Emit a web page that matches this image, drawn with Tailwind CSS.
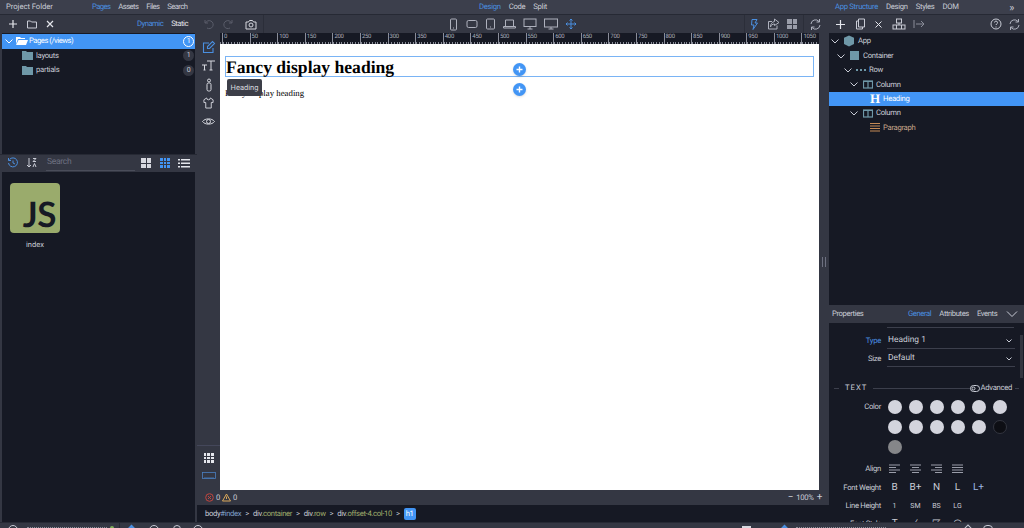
<!DOCTYPE html>
<html><head><meta charset="utf-8"><script src="https://cdn.jsdelivr.net/npm/@tailwindcss/browser@4"></script></head>
<body class="m-0 overflow-hidden bg-[#343743]">
<div class="w-[1024px] h-[528px] overflow-hidden flex flex-col font-['Roboto','Noto_Sans',sans-serif] text-[7.700px] tracking-[-0.3px] [text-rendering:geometricPrecision] text-[#c9ccd6] leading-none">
 <div class="flex h-[522px] shrink-0">
  <!-- LEFT -->
  <div class="w-[197px] shrink-0 flex flex-col border-l-2 border-r-2 border-[#343743] bg-[#161924]">
   <div class="h-[15px] -mx-[2px] shrink-0 bg-[#3c3f4c] flex items-center pl-[6px] border-b border-[#262934] tracking-[-0.6px]">
    <span class="w-[86px] shrink-0 tracking-[-0.05px]">Project Folder</span>
    <span class="text-[#4a8fe0]">Pages</span><span class="ml-[8px]">Assets</span><span class="ml-[8px]">Files</span><span class="ml-[8px]">Search</span>
   </div>
   <div class="h-[18px] shrink-0 bg-[#343743] flex items-center pl-[7px] -mx-[2px] text-[#e4e6ec] tracking-[-0.5px]">
    <svg class="shrink-0" width="12" height="12" viewBox="0 0 12 12" fill="none" stroke="#e4e6ec" stroke-width="1.200"><path d="M6 2v8M2 6h8"/></svg>
    <svg class="ml-[7px] shrink-0" width="12" height="12" viewBox="0 0 12 12" fill="none" stroke="#c9ccd6"><path d="M1.500 3h3l1 1h5v6h-9z"/></svg>
    <svg class="ml-[7px] shrink-0" width="10" height="10" viewBox="0 0 10 10" fill="none" stroke="#e4e6ec" stroke-width="1.200"><path d="M2 2l6 6M8 2l-6 6"/></svg>
    <span class="ml-[82px] text-[#4a8fe0]">Dynamic</span><span class="ml-[8px]">Static</span>
   </div>
   <div class="h-[14.500px] shrink-0 bg-[#4295f5] flex items-center text-white pl-[2px] mt-[1px]">
    <svg width="10" height="10" viewBox="0 0 10 10" fill="none" stroke="white"><path d="M1.500 3.500L5 7l3.500-3.500"/></svg>
    <svg class="ml-[2px]" width="12" height="10" viewBox="0 0 12 10" fill="white"><path d="M0 1h4l1 1h4v1H2L0 8zM2.500 4H12L10 9H0z"/></svg>
    <span class="ml-[1px] tracking-[-0.5px]">Pages (/views)</span>
    <span class="ml-auto mr-[1px] w-[11px] h-[11px] rounded-full border border-white flex items-center justify-center text-[7px]">1</span>
   </div>
   <div class="h-[14.500px] shrink-0 flex items-center pl-[20px]">
    <svg width="11" height="9" viewBox="0 0 11 9" fill="#6f98a8"><path d="M0 0h4l1 1h6v8H0z"/></svg>
    <span class="ml-[3px]">layouts</span>
    <span class="ml-auto mr-[1px] w-[11px] h-[11px] rounded-full bg-[#343743] flex items-center justify-center text-[7px]">1</span>
   </div>
   <div class="h-[14.500px] shrink-0 flex items-center pl-[20px]">
    <svg width="11" height="9" viewBox="0 0 11 9" fill="#6f98a8"><path d="M0 0h4l1 1h6v8H0z"/></svg>
    <span class="ml-[3px]">partials</span>
    <span class="ml-auto mr-[1px] w-[11px] h-[11px] rounded-full bg-[#343743] flex items-center justify-center text-[7px]">0</span>
   </div>
   <div class="h-[76px] shrink-0"></div>
   <div class="h-[18px] shrink-0 -mx-[2px] bg-[#343743] flex items-center pl-[7px] border-t border-[#262934]">
    <svg class="shrink-0" width="12" height="12" viewBox="0 0 12 12" fill="none" stroke="#4a8fe0"><path d="M2.500 2.500A4.500 4.500 0 1 1 1.500 6M1.500 1v2.500H4M6 3.500V6l2 1"/></svg>
    <svg class="ml-[7px] shrink-0" width="12" height="12" viewBox="0 0 12 12" fill="none" stroke="#c9ccd6"><path d="M3 1v9M1 8l2 2 2-2M7 1.500h3l-3 3h3M7 10l1.500-3.500L10 10"/></svg>
    <div class="ml-[8px] w-[89px] h-[15px] shrink-0 flex items-center border-b border-[#4a4d5a] text-[#6d7080] text-[8.500px] pl-[1px]">Search</div>
    <div class="ml-[6px] w-[10px] h-[10px] shrink-0 grid grid-cols-2 gap-[1px]"><i class="bg-[#d6d8df]"></i><i class="bg-[#d6d8df]"></i><i class="bg-[#d6d8df]"></i><i class="bg-[#d6d8df]"></i></div>
    <div class="ml-[9px] w-[10px] h-[10px] shrink-0 grid grid-cols-3 gap-[1px]"><i class="bg-[#4295f5]"></i><i class="bg-[#4295f5]"></i><i class="bg-[#4295f5]"></i><i class="bg-[#4295f5]"></i><i class="bg-[#4295f5]"></i><i class="bg-[#4295f5]"></i><i class="bg-[#4295f5]"></i><i class="bg-[#4295f5]"></i><i class="bg-[#4295f5]"></i></div>
    <svg class="ml-[8px] shrink-0" width="12" height="10" viewBox="0 0 12 10" fill="#e4e6ec"><path d="M0 1h2v1.500H0zM3 1h9v1.500H3zM0 4.500h2V6H0zM3 4.500h9V6H3zM0 8h2v1.500H0zM3 8h9v1.500H3z"/></svg>
   </div>
   <div class="ml-[8px] mt-[11px] w-[50px] h-[50px] rounded-[4px] bg-[#9aab6c] flex items-end justify-end pr-[4px] pb-[1px]">
    <span class="font-['Lato',sans-serif] font-bold text-[#161924] text-[35px] leading-none tracking-[-0.5px]">JS</span>
   </div>
   <div class="ml-[8px] w-[50px] text-center mt-[8px] text-[7.500px] tracking-normal">index</div>
  </div>

  <!-- MIDDLE -->
  <div class="flex-1 min-w-0 flex flex-col">
   <div class="h-[15px] shrink-0 bg-[#3c3f4c] border-b border-[#262934] flex items-center justify-center gap-[8px]">
    <span class="text-[#4a8fe0]">Design</span><span>Code</span><span>Split</span>
   </div>
   <div class="h-[18px] shrink-0 bg-[#343743] flex items-center relative">
    <div class="w-[67px] h-full flex items-center border-r border-[#2b2e39] pl-[6px] gap-[7px]">
     <svg width="12" height="12" viewBox="0 0 12 12" fill="none" stroke="#5a5d6a"><path d="M2 2v3h3M2.500 5A4 4 0 1 1 4 10"/></svg>
     <svg width="12" height="12" viewBox="0 0 12 12" fill="none" stroke="#5a5d6a"><path d="M10 2v3H7M9.500 5A4 4 0 1 0 8 10"/></svg>
     <svg class="ml-[4px]" width="12" height="11" viewBox="0 0 12 11" fill="none" stroke="#d6d8df"><path d="M1 3h2.500L4.500 1.500h3L8.500 3H11v7H1z"/><circle cx="6" cy="6" r="2"/></svg>
    </div>
    <div class="flex-1 h-full flex items-center pl-[184px] gap-[7px]">
     <svg width="11" height="13" viewBox="0 0 11 13" fill="none" stroke="#aeb1bd"><rect x="2.500" y="1" width="6" height="11" rx="1"/><path d="M5 10h1"/></svg>
     <svg width="12" height="10" viewBox="0 0 12 10" fill="none" stroke="#aeb1bd"><rect x="1" y="1.500" width="10" height="7" rx="1.500"/></svg>
     <svg width="11" height="12" viewBox="0 0 11 12" fill="none" stroke="#aeb1bd"><rect x="1.500" y="1" width="8" height="10" rx="1"/><path d="M5 9h1"/></svg>
     <svg width="13" height="12" viewBox="0 0 13 12" fill="none" stroke="#aeb1bd"><path d="M2.500 8V2h8v6M.5 8.500h12v1.500H.5z"/></svg>
     <svg width="14" height="12" viewBox="0 0 14 12" fill="none" stroke="#aeb1bd"><rect x="1" y="1" width="12" height="7.500"/><path d="M7 8.500V11M4.500 11h5"/></svg>
     <svg width="14" height="12" viewBox="0 0 14 12" fill="none" stroke="#aeb1bd"><rect x=".5" y="1" width="13" height="8"/><path d="M7 9v2M4.500 11h5"/></svg>
     <svg width="12" height="12" viewBox="0 0 12 12" fill="none" stroke="#4a8fe0"><path d="M6 1v10M1 6h10M4.500 2.500L6 1l1.500 1.500M4.500 9.500L6 11l1.500-1.500M2.500 4.500L1 6l1.500 1.500M9.500 4.500L11 6 9.500 7.500"/></svg>
    </div>
    <div class="w-[85px] h-full flex items-center border-l border-[#2b2e39] pl-[3px]">
     <svg width="12" height="13" viewBox="0 0 12 13" fill="none" stroke="#4a8fe0"><path d="M4 1.500h5L7 5h2.500L5 11.500 6 7H3.500z"/></svg>
     <svg class="ml-[7px]" width="13" height="12" viewBox="0 0 13 12" fill="none" stroke="#aeb1bd"><path d="M10 7.500V11H1.500V3.500H5M7.500 1L12 4.500 7.500 7.500V6C5.500 6 4 7 3.500 9c0-3 1.500-5 4-5.500z"/></svg>
     <div class="ml-[7px] w-[10px] h-[10px] grid grid-cols-2 gap-[1px]"><i class="bg-[#9a9da9]"></i><i class="bg-[#9a9da9]"></i><i class="bg-[#9a9da9]"></i><i class="bg-[#9a9da9]"></i></div>
     <div class="ml-[6px] w-px h-full bg-[#2b2e39]"></div>
     <svg class="ml-[5px]" width="13" height="13" viewBox="0 0 13 13" fill="none" stroke="#aeb1bd"><path d="M2 6a4.500 4.500 0 0 1 8-2.500M11 7a4.500 4.500 0 0 1-8 2.500M10.500 1v3H7.500M2.500 12V9h3"/></svg>
    </div>
   </div>
   <div class="flex-1 min-h-0 flex">
    <div class="w-[23px] shrink-0 flex flex-col items-center bg-[#343743] pt-[7px]">
     <svg width="14" height="14" viewBox="0 0 14 14" fill="none" stroke="#4a8fe0" stroke-width="1.100"><path d="M11 8v4.500H1.500V3H7M5.500 6.500v2h2l5-5-2-2z"/></svg>
     <svg class="mt-[5px]" width="15" height="13" viewBox="0 0 15 13" fill="none" stroke="#d6d8df"><path d="M6 2h8M10 2v9M8.500 11h3M1 6h5M3.500 6v5M2.500 11h2"/></svg>
     <svg class="mt-[6px]" width="10" height="14" viewBox="0 0 10 14" fill="none" stroke="#d6d8df"><circle cx="5" cy="2.500" r="1.500"/><rect x="3" y="5" width="4" height="8" rx="1.500"/></svg>
     <svg class="mt-[5px]" width="11" height="12" viewBox="0 0 12 13" fill="none" stroke="#d6d8df"><path d="M4 1L1 3v3h2v6h6V6h2V3L8 1a2 2 0 0 1-4 0z"/></svg>
     <svg class="mt-[8px]" width="13" height="9" viewBox="0 0 13 9" fill="none" stroke="#d6d8df"><path d="M.5 4.500C3 1 10 1 12.500 4.500 10 8 3 8 .5 4.500z"/><circle cx="6.500" cy="4.500" r="2"/></svg>
     <div class="mt-auto w-full border-t border-[#44475a] h-[45px] flex flex-col items-center pt-[7px]">
      <div class="w-[10px] h-[10px] grid grid-cols-3 gap-[1px]"><i class="bg-[#e4e6ec]"></i><i class="bg-[#e4e6ec]"></i><i class="bg-[#e4e6ec]"></i><i class="bg-[#e4e6ec]"></i><i class="bg-[#e4e6ec]"></i><i class="bg-[#e4e6ec]"></i><i class="bg-[#e4e6ec]"></i><i class="bg-[#e4e6ec]"></i><i class="bg-[#e4e6ec]"></i></div>
      <svg class="mt-[9px]" width="14" height="7" viewBox="0 0 14 7" fill="none" stroke="#4a7fc0" stroke-width=".8"><rect x=".5" y=".5" width="13" height="6"/><path d="M3 6.500V5M5 6.500V5M7 6.500V5M9 6.500V5M11 6.500V5"/></svg>
     </div>
    </div>
    <div class="w-[599px] shrink-0 flex flex-col relative bg-white">
     <div class="h-[11px] shrink-0 bg-[#161924] flex text-[6px] text-[#a9acb8] overflow-hidden bg-[repeating-linear-gradient(90deg,#8a8d99_0,#8a8d99_1px,transparent_1px,transparent_2.760px)] bg-[length:100%_2px] bg-bottom bg-no-repeat pl-[2px]">
      <span class="w-[27.600px] shrink-0 border-l border-[#8a8d99] pl-[1px] pt-[1px]">0</span><span class="w-[27.600px] shrink-0 border-l border-[#8a8d99] pl-[1px] pt-[1px]">50</span><span class="w-[27.600px] shrink-0 border-l border-[#8a8d99] pl-[1px] pt-[1px]">100</span><span class="w-[27.600px] shrink-0 border-l border-[#8a8d99] pl-[1px] pt-[1px]">150</span><span class="w-[27.600px] shrink-0 border-l border-[#8a8d99] pl-[1px] pt-[1px]">200</span><span class="w-[27.600px] shrink-0 border-l border-[#8a8d99] pl-[1px] pt-[1px]">250</span><span class="w-[27.600px] shrink-0 border-l border-[#8a8d99] pl-[1px] pt-[1px]">300</span><span class="w-[27.600px] shrink-0 border-l border-[#8a8d99] pl-[1px] pt-[1px]">350</span><span class="w-[27.600px] shrink-0 border-l border-[#8a8d99] pl-[1px] pt-[1px]">400</span><span class="w-[27.600px] shrink-0 border-l border-[#8a8d99] pl-[1px] pt-[1px]">450</span><span class="w-[27.600px] shrink-0 border-l border-[#8a8d99] pl-[1px] pt-[1px]">500</span><span class="w-[27.600px] shrink-0 border-l border-[#8a8d99] pl-[1px] pt-[1px]">550</span><span class="w-[27.600px] shrink-0 border-l border-[#8a8d99] pl-[1px] pt-[1px]">600</span><span class="w-[27.600px] shrink-0 border-l border-[#8a8d99] pl-[1px] pt-[1px]">650</span><span class="w-[27.600px] shrink-0 border-l border-[#8a8d99] pl-[1px] pt-[1px]">700</span><span class="w-[27.600px] shrink-0 border-l border-[#8a8d99] pl-[1px] pt-[1px]">750</span><span class="w-[27.600px] shrink-0 border-l border-[#8a8d99] pl-[1px] pt-[1px]">800</span><span class="w-[27.600px] shrink-0 border-l border-[#8a8d99] pl-[1px] pt-[1px]">850</span><span class="w-[27.600px] shrink-0 border-l border-[#8a8d99] pl-[1px] pt-[1px]">900</span><span class="w-[27.600px] shrink-0 border-l border-[#8a8d99] pl-[1px] pt-[1px]">950</span><span class="w-[27.600px] shrink-0 border-l border-[#8a8d99] pl-[1px] pt-[1px]">1000</span><span class="w-[27.600px] shrink-0 border-l border-[#8a8d99] pl-[1px] pt-[1px]">1050</span>
     </div>
     <div class="flex-1 font-['Liberation_Serif',serif] text-black tracking-normal pl-[5px] pt-[12px]">
      <h1 class="w-[589px] h-[21px] border border-[#7ab4f5] text-[17.600px] font-bold leading-[20px]">Fancy display heading</h1>
      <p class="text-[8.800px] leading-[10px] mt-[11px]">Fancy display heading</p>
     </div>
     <div class="absolute left-[7px] top-[46px] w-[35px] h-[17px] rounded-[2px] bg-[#3c3e48] text-[#d6d8df] text-[7.500px] tracking-normal flex items-center justify-center">Heading</div>
     <div class="absolute left-[293px] top-[30px] w-[13px] h-[13px] rounded-full bg-[#4295f5] shadow-sm flex items-center justify-center"><svg width="7" height="7" viewBox="0 0 7 7" stroke="white" stroke-width="1.400"><path d="M3.500 .5v6M.5 3.500h6"/></svg></div>
     <div class="absolute left-[293px] top-[50px] w-[13px] h-[13px] rounded-full bg-[#4295f5] shadow-sm flex items-center justify-center"><svg width="7" height="7" viewBox="0 0 7 7" stroke="white" stroke-width="1.400"><path d="M3.500 .5v6M.5 3.500h6"/></svg></div>
    </div>
    <div class="flex-1 bg-[#343743] relative">
     <div class="absolute left-[3px] top-[224px] w-[4px] h-[10px] border-x border-[#6d7080]"></div>
    </div>
   </div>
   <div class="h-[15px] shrink-0 bg-[#343743] flex items-center text-[#c9ccd6]">
    <svg class="ml-[8px]" width="9" height="9" viewBox="0 0 9 9" fill="none" stroke="#c0453f"><circle cx="4.500" cy="4.500" r="3.800"/><path d="M3 3l3 3M6 3L3 6"/></svg>
    <span class="ml-[2px]">0</span>
    <svg class="ml-[2px]" width="9" height="9" viewBox="0 0 9 9" fill="none" stroke="#d9a75a"><path d="M4.500 1L8.500 8H.5zM4.500 3.500V6"/></svg>
    <span class="ml-[2px]">0</span>
    <div class="ml-auto mr-[7px] flex items-center gap-[3px]"><span class="text-[10px]">−</span><span>100%</span><span class="text-[10px]">+</span></div>
   </div>
   <div class="h-[17px] shrink-0 bg-[#161924] flex items-center pl-[8px] gap-[4px] tracking-[-0.35px]">
    <span>body<span class="text-[#7f9fc9]">#index</span></span><span>&gt;</span>
    <span>div<span class="text-[#a0ad6c]">.container</span></span><span>&gt;</span>
    <span>div<span class="text-[#a0ad6c]">.row</span></span><span>&gt;</span>
    <span>div<span class="text-[#a0ad6c]">.offset-4.col-10</span></span><span>&gt;</span>
    <span class="w-[12px] h-[12px] rounded-[2px] bg-[#4295f5] text-white flex items-center justify-center">h1</span>
   </div>
  </div>

  <!-- RIGHT -->
  <div class="w-[195px] shrink-0 flex flex-col bg-[#161924]">
   <div class="h-[15px] shrink-0 bg-[#3c3f4c] border-b border-[#262934] flex items-center pl-[6px] gap-[8px]">
    <span class="text-[#4a8fe0]">App Structure</span><span>Design</span><span>Styles</span><span>DOM</span><span class="ml-auto mr-[10px] text-[11px] leading-none">»</span>
   </div>
   <div class="h-[18px] shrink-0 bg-[#343743] flex items-center pl-[6px]">
    <svg width="11" height="11" viewBox="0 0 11 11" fill="none" stroke="#e4e6ec" stroke-width="1.200"><path d="M5.500 1v9M1 5.500h9"/></svg>
    <svg class="ml-[9px]" width="11" height="12" viewBox="0 0 11 12" fill="none" stroke="#c9ccd6"><path d="M3.500 1h6v8h-6zM3.500 3H1.500v8h6V9"/></svg>
    <svg class="ml-[8px]" width="9" height="9" viewBox="0 0 9 9" fill="none" stroke="#e4e6ec"><path d="M1.500 1.500l6 6M7.500 1.500l-6 6"/></svg>
    <svg class="ml-[9px]" width="14" height="12" viewBox="0 0 14 12" fill="none" stroke="#c9ccd6"><rect x="4.500" y="1" width="5" height="4"/><rect x="1" y="7" width="12" height="4"/><path d="M7 5v2M4.500 7v4M9.500 7v4"/></svg>
    <svg class="ml-[7px]" width="12" height="10" viewBox="0 0 12 10" fill="none" stroke="#8a8d99"><path d="M1 1v8M3 5h8M8 2l3 3-3 3"/></svg>
    <svg class="ml-[65px]" width="12" height="12" viewBox="0 0 12 12" fill="none" stroke="#c9ccd6"><circle cx="6" cy="6" r="5"/><path d="M4.500 4.500a1.500 1.500 0 1 1 2 1.500L6 7M6 8.500v1"/></svg>
    <svg class="ml-[6px]" width="13" height="13" viewBox="0 0 13 13" fill="none" stroke="#aeb1bd"><path d="M2 6a4.500 4.500 0 0 1 8-2.500M11 7a4.500 4.500 0 0 1-8 2.500M10.500 1v3H7.500M2.500 12V9h3"/></svg>
   </div>
   <div class="pt-[1px]">
    <div class="h-[14.400px] flex items-center pl-[1px]">
     <svg width="10" height="10" viewBox="0 0 10 10" fill="none" stroke="#c9ccd6"><path d="M1.500 3.500L5 7l3.500-3.500"/></svg>
     <svg class="ml-[3px]" width="12" height="12" viewBox="0 0 12 12" fill="#6f98a8"><path d="M6 .5l5 2.200v6.300L6 11.500 1 9V2.700z"/></svg><span class="ml-[3px]">App</span>
    </div>
    <div class="h-[14.400px] flex items-center pl-[7px]">
     <svg width="10" height="10" viewBox="0 0 10 10" fill="none" stroke="#c9ccd6"><path d="M1.500 3.500L5 7l3.500-3.500"/></svg>
     <span class="ml-[4px] w-[9px] h-[9px] bg-[#6f98a8]"></span><span class="ml-[4px]">Container</span>
    </div>
    <div class="h-[14.400px] flex items-center pl-[14px]">
     <svg width="10" height="10" viewBox="0 0 10 10" fill="none" stroke="#c9ccd6"><path d="M1.500 3.500L5 7l3.500-3.500"/></svg>
     <svg class="ml-[3px]" width="10" height="4" viewBox="0 0 10 4" fill="#6f98a8"><rect y="1" width="2" height="2"/><rect x="4" y="1" width="2" height="2"/><rect x="8" y="1" width="2" height="2"/></svg><span class="ml-[3px]">Row</span>
    </div>
    <div class="h-[14.400px] flex items-center pl-[20px]">
     <svg width="10" height="10" viewBox="0 0 10 10" fill="none" stroke="#c9ccd6"><path d="M1.500 3.500L5 7l3.500-3.500"/></svg>
     <svg class="ml-[4px]" width="10" height="9" viewBox="0 0 10 9" fill="none" stroke="#6f98a8"><rect x=".5" y="1" width="9" height="7" stroke-width="1.200"/><path d="M5 1v7M.5 1.500h9" stroke-width="1.200"/></svg><span class="ml-[3px]">Column</span>
    </div>
    <div class="h-[14.400px] flex items-center pl-[41px] bg-[#4295f5] text-white">
     <span class="font-['Liberation_Serif',serif] font-bold text-[13px] leading-none w-[10px] text-center">H</span><span class="ml-[3px]">Heading</span>
    </div>
    <div class="h-[14.400px] flex items-center pl-[20px]">
     <svg width="10" height="10" viewBox="0 0 10 10" fill="none" stroke="#c9ccd6"><path d="M1.500 3.500L5 7l3.500-3.500"/></svg>
     <svg class="ml-[4px]" width="10" height="9" viewBox="0 0 10 9" fill="none" stroke="#6f98a8"><rect x=".5" y="1" width="9" height="7" stroke-width="1.200"/><path d="M5 1v7M.5 1.500h9" stroke-width="1.200"/></svg><span class="ml-[3px]">Column</span>
    </div>
    <div class="h-[14.400px] flex items-center pl-[41px]">
     <svg width="10" height="9" viewBox="0 0 10 9" stroke="#c48a55"><path d="M0 .5h10M0 3h10M0 5.500h10M0 8h10"/></svg><span class="ml-[3px] text-[#c8a78c]">Paragraph</span>
    </div>
   </div>
   <div class="mt-auto h-[217px] shrink-0 flex flex-col relative overflow-hidden">
    <div class="h-[18px] shrink-0 bg-[#343743] flex items-center pl-[3px] tracking-[-0.4px]">
     <span class="w-[76px] shrink-0">Properties</span><span class="text-[#4a8fe0]">General</span><span class="ml-[8px]">Attributes</span><span class="ml-[8px]">Events</span>
     <svg class="ml-auto mr-[6px]" width="12" height="8" viewBox="0 0 12 8" fill="none" stroke="#c9ccd6"><path d="M1 1.500L6 6.500l5-5"/></svg>
    </div>
    <div class="h-[5px] shrink-0 flex">
     <div class="w-[52px] h-[2px] overflow-hidden flex items-end justify-end text-[#9a9da9]">Class</div>
     <div class="ml-[6px] w-[127px] border-b border-[#3c3f4c]"></div>
    </div>
    <div class="h-[18px] shrink-0 flex items-center mt-[4px]">
     <span class="w-[52px] text-right text-[#4a8fe0]">Type</span>
     <div class="ml-[6px] w-[128px] h-[15px] border-b border-[#3c3f4c] flex items-center justify-between pl-[1px] pr-[3px] text-[8.400px] tracking-normal">Heading 1<svg width="6" height="4" viewBox="0 0 6 4" fill="none" stroke="#c9ccd6"><path d="M.5 .5L3 3 5.500 .5"/></svg></div>
    </div>
    <div class="h-[18px] shrink-0 flex items-center">
     <span class="w-[52px] text-right">Size</span>
     <div class="ml-[6px] w-[128px] h-[15px] border-b border-[#3c3f4c] flex items-center justify-between pl-[1px] pr-[3px] text-[8.400px] tracking-normal">Default<svg width="6" height="4" viewBox="0 0 6 4" fill="none" stroke="#c9ccd6"><path d="M.5 .5L3 3 5.500 .5"/></svg></div>
    </div>
    <div class="h-[16px] shrink-0 mt-[12px] flex items-center pl-[5px] pr-[5px]">
     <span class="w-[5px] h-px bg-[#3c3f4c]"></span>
     <span class="ml-[6px] tracking-[1px]">TEXT</span>
     <span class="ml-[6px] flex-1 h-px bg-[#3c3f4c]"></span>
     <svg width="10" height="7" viewBox="0 0 10 7" fill="none" stroke="#c9ccd6"><rect x=".5" y=".5" width="9" height="6" rx="3"/><circle cx="3.500" cy="3.500" r="1.500"/></svg>
     <span class="ml-[1px]">Advanced</span>
     <span class="ml-[3px] w-[4px] h-px bg-[#3c3f4c]"></span>
    </div>
    <div class="mt-[4px] flex">
     <span class="w-[52px] text-right pt-[3px]">Color</span>
     <div class="ml-[7px] grid grid-cols-[repeat(6,14px)] gap-y-[6px] gap-x-[7px] [&>i]:w-[14px] [&>i]:h-[14px] [&>i]:rounded-full [&>i]:bg-[#d3d4dd]">
      <i></i><i></i><i></i><i></i><i></i><i></i>
      <i></i><i></i><i></i><i></i><i></i><i class="!bg-[#0d0e14] border border-[#33353f]"></i>
      <i class="!bg-[#858689]"></i>
     </div>
    </div>
    <div class="h-[18px] shrink-0 flex items-center mt-[6px]">
     <span class="w-[52px] text-right">Align</span>
     <div class="ml-[8px] flex gap-[10px]">
      <svg width="11" height="10" viewBox="0 0 11 10" stroke="#9a9da9"><path d="M0 1h11M0 3.500h7M0 6h11M0 8.500h7"/></svg>
      <svg width="11" height="10" viewBox="0 0 11 10" stroke="#9a9da9"><path d="M0 1h11M2 3.500h7M0 6h11M2 8.500h7"/></svg>
      <svg width="11" height="10" viewBox="0 0 11 10" stroke="#9a9da9"><path d="M0 1h11M4 3.500h7M0 6h11M4 8.500h7"/></svg>
      <svg width="11" height="10" viewBox="0 0 11 10" stroke="#9a9da9"><path d="M0 1h11M0 3.500h11M0 6h11M0 8.500h11"/></svg>
     </div>
    </div>
    <div class="h-[19px] shrink-0 flex items-center">
     <span class="w-[52px] text-right">Font Weight</span>
     <div class="ml-[3px] flex text-[10px] tracking-normal [&>span]:w-[21px] [&>span]:text-center"><span>B</span><span>B+</span><span>N</span><span>L</span><span class="text-[#9cb7e0]">L+</span></div>
    </div>
    <div class="h-[18px] shrink-0 flex items-center">
     <span class="w-[52px] text-right">Line Height</span>
     <div class="ml-[3px] flex text-[7px] tracking-normal [&>span]:w-[21px] [&>span]:text-center"><span>1</span><span>SM</span><span>BS</span><span>LG</span></div>
    </div>
    <div class="h-[18px] shrink-0 flex items-center">
     <span class="w-[52px] text-right">Font Style</span>
     <div class="ml-[3px] flex text-[10px] [&>span]:w-[21px] [&>span]:text-center"><span>T</span><span>∕</span><span>◸</span><span>◠</span></div>
    </div>
    <div class="absolute right-[1px] top-[30px] w-[3px] h-[43px] bg-[#33353f]"></div>
   </div>
  </div>
 </div>
 <!-- BOTTOM -->
 <div class="h-[6px] shrink-0 bg-[#343743] border-t border-[#262934] flex items-start pt-[2px] overflow-hidden relative">
  <span class="ml-[8px] w-[10px] h-[10px] rounded-full border border-[#c9ccd6] shrink-0"></span>
  <span class="ml-[9px] w-[80px] h-[4px] border-t border-dotted border-[#8a8d99] mt-[2px]"></span>
  <span class="ml-[3px] w-[4px] h-[4px] rounded-full bg-[#7fb05a] mt-[1px]"></span>
  <span class="ml-[5px] w-px h-[6px] bg-[#262934] -mt-[2px]"></span>
  <span class="ml-[8px] w-[7px] h-[7px] bg-[#4a8fe0] rotate-45 mt-[1px]"></span>
  <span class="ml-[14px] w-[10px] h-[10px] rounded-full border border-[#c9ccd6]"></span>
  <span class="ml-[14px] w-[8px] h-[8px] rounded-sm border border-[#c9ccd6]"></span>
  <span class="ml-[12px] w-[10px] h-[10px] rounded-full border border-[#c9ccd6]"></span>
  <span class="ml-auto w-[9px] h-[6px] bg-[#d6d8df] mt-[1px]"></span>
  <span class="ml-[30px] w-[7px] h-[7px] bg-[#4a8fe0] rotate-45 mt-[1px]"></span>
  <span class="ml-[8px] w-[90px] h-[4px] border-t border-dotted border-[#8a8d99] mt-[2px]"></span>
  <span class="ml-[78px] w-[8px] h-[8px] rotate-45 border border-[#c9ccd6] mt-[1px]"></span>
  <span class="ml-[11px] w-[10px] h-[10px] rounded-sm border border-[#c9ccd6] mr-[31px]"></span>
 </div>
</div>
</body></html>
